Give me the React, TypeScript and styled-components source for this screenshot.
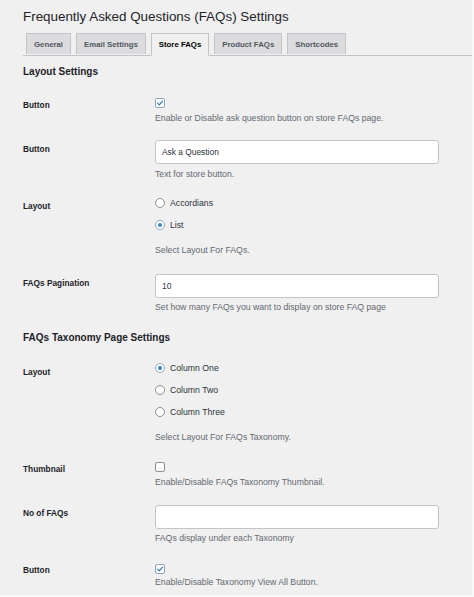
import React from "react";
import styled, { createGlobalStyle } from "styled-components";

const GlobalStyle = createGlobalStyle`
  html, body {
    margin: 0;
    padding: 0;
    background: #f0f0f1;
  }
  body {
    font-family: "Liberation Sans", Arial, sans-serif;
    color: #1d2327;
  }
`;

// Contenedor de la página (con el borde claro del recorte)
const Page = styled.div`
  min-height: 597px;
  padding: 8px 0 0 23px;
  box-sizing: border-box;
  border-right: 2px solid #f8f8f8;
  border-bottom: 2px solid #f8f8f8;
  overflow: hidden;
`;

const Title = styled.h1`
  margin: 0;
  font-size: 13.4px;
  line-height: 18px;
  font-weight: 400;
  color: #1d2327;
`;

// Barra de pestañas
const TabBar = styled.nav`
  display: flex;
  gap: 5px;
  margin-top: 7px;
  padding-left: 3px;
  border-bottom: 1px solid #c3c4c7;
`;

const Tab = styled.a<{ $active?: boolean }>`
  display: flex;
  align-items: center;
  height: 20px;
  padding: 0 7px;
  border: 1px solid #c3c4c7;
  border-bottom: none;
  margin-bottom: ${({ $active }) => ($active ? "-1px" : "0")};
  background: ${({ $active }) => ($active ? "#f0f0f1" : "#dcdcde")};
  color: ${({ $active }) => ($active ? "#000" : "#50575e")};
  font-size: 7.8px;
  font-weight: 700;
  text-decoration: none;
  ${({ $active }) => $active && "height: 21px; border-bottom: 1px solid #f0f0f1;"}
`;

const SectionTitle = styled.h2<{ $top: number }>`
  margin: ${({ $top }) => $top}px 0 0;
  font-size: 10px;
  line-height: 14px;
  font-weight: 700;
  color: #1d2327;
`;

// Fila del formulario: etiqueta + campo
const Row = styled.div<{ $top: number }>`
  display: flex;
  align-items: flex-start;
  padding-top: ${({ $top }) => $top}px;
`;

const Label = styled.div<{ $offset: number }>`
  width: 132px;
  flex-shrink: 0;
  margin-top: ${({ $offset }) => $offset}px;
  font-size: 8.3px;
  line-height: 12px;
  font-weight: 700;
  color: #1d2327;
`;

const Field = styled.div`
  display: flex;
  flex-direction: column;
  width: 284px;
`;

const Description = styled.p<{ $gap: number }>`
  margin: ${({ $gap }) => $gap}px 0 0;
  font-size: 8.7px;
  line-height: 12px;
  color: #646970;
`;

const TextInput = styled.input`
  box-sizing: border-box;
  width: 284px;
  height: 24px;
  margin: 0;
  padding: 0 6px;
  border: 1px solid #c3c4c7;
  border-radius: 3px;
  background: #fff;
  font-family: inherit;
  font-size: 8.4px;
  color: #2c3338;
  outline: none;
`;

const CheckBox = styled.span<{ $checked?: boolean }>`
  box-sizing: border-box;
  display: flex;
  align-items: center;
  justify-content: center;
  width: 10px;
  height: 10px;
  border: 1px solid ${({ $checked }) => ($checked ? "#8fa3b8" : "#8c8f94")};
  border-radius: 2px;
  background: #fff;

  svg {
    width: 8px;
    height: 8px;
  }
`;

const Options = styled.div`
  display: flex;
  flex-direction: column;
`;

const Option = styled.label`
  display: flex;
  align-items: center;
  gap: 5px;
  height: 22px;
  font-size: 8.7px;
  color: #2c3338;
`;

const Radio = styled.span<{ $checked?: boolean }>`
  box-sizing: border-box;
  display: flex;
  align-items: center;
  justify-content: center;
  width: 10px;
  height: 10px;
  border: 1px solid ${({ $checked }) => ($checked ? "#8fa3b8" : "#8c8f94")};
  border-radius: 50%;
  background: #fff;

  &::after {
    content: "";
    display: ${({ $checked }) => ($checked ? "block" : "none")};
    width: 4px;
    height: 4px;
    border-radius: 50%;
    background: #3582c4;
  }
`;

const Check = ({ checked }: { checked?: boolean }) => (
  <CheckBox $checked={checked}>
    {checked && (
      <svg viewBox="0 0 10 10" fill="none">
        <path d="M2 5.2 4.1 7.3 8.2 2.6" stroke="#2271b1" strokeWidth="1.4" strokeLinecap="round" strokeLinejoin="round" />
      </svg>
    )}
  </CheckBox>
);

const RadioGroup = ({ items, selected }: { items: string[]; selected: number }) => (
  <Options>
    {items.map((item, i) => (
      <Option key={item}>
        <Radio $checked={i === selected} />
        {item}
      </Option>
    ))}
  </Options>
);

const tabs = ["General", "Email Settings", "Store FAQs", "Product FAQs", "Shortcodes"];

export default function App() {
  return (
    <>
      <GlobalStyle />
      <Page>
        <Title>Frequently Asked Questions (FAQs) Settings</Title>
        <TabBar>
          {tabs.map((t) => (
            <Tab key={t} $active={t === "Store FAQs"}>
              {t}
            </Tab>
          ))}
        </TabBar>

        <SectionTitle $top={9}>Layout Settings</SectionTitle>

        <Row $top={19}>
          <Label $offset={1}>Button</Label>
          <Field>
            <Check checked />
            <Description $gap={4}>Enable or Disable ask question button on store FAQs page.</Description>
          </Field>
        </Row>

        <Row $top={16}>
          <Label $offset={3}>Button</Label>
          <Field>
            <TextInput defaultValue="Ask a Question" />
            <Description $gap={4}>Text for store button.</Description>
          </Field>
        </Row>

        <Row $top={12}>
          <Label $offset={8}>Layout</Label>
          <Field>
            <RadioGroup items={["Accordians", "List"]} selected={1} />
            <Description $gap={8}>Select Layout For FAQs.</Description>
          </Field>
        </Row>

        <Row $top={18}>
          <Label $offset={3}>FAQs Pagination</Label>
          <Field>
            <TextInput defaultValue="10" />
            <Description $gap={3}>Set how many FAQs you want to display on store FAQ page</Description>
          </Field>
        </Row>

        <SectionTitle $top={18}>FAQs Taxonomy Page Settings</SectionTitle>

        <Row $top={12}>
          <Label $offset={9}>Layout</Label>
          <Field>
            <RadioGroup items={["Column One", "Column Two", "Column Three"]} selected={0} />
            <Description $gap={8}>Select Layout For FAQs Taxonomy.</Description>
          </Field>
        </Row>

        <Row $top={19}>
          <Label $offset={1}>Thumbnail</Label>
          <Field>
            <Check />
            <Description $gap={4}>Enable/Disable FAQs Taxonomy Thumbnail.</Description>
          </Field>
        </Row>

        <Row $top={17}>
          <Label $offset={2}>No of FAQs</Label>
          <Field>
            <TextInput defaultValue="" />
            <Description $gap={3}>FAQs display under each Taxonomy</Description>
          </Field>
        </Row>

        <Row $top={20}>
          <Label $offset={0}>Button</Label>
          <Field>
            <Check checked />
            <Description $gap={2}>Enable/Disable Taxonomy View All Button.</Description>
          </Field>
        </Row>
      </Page>
    </>
  );
}
